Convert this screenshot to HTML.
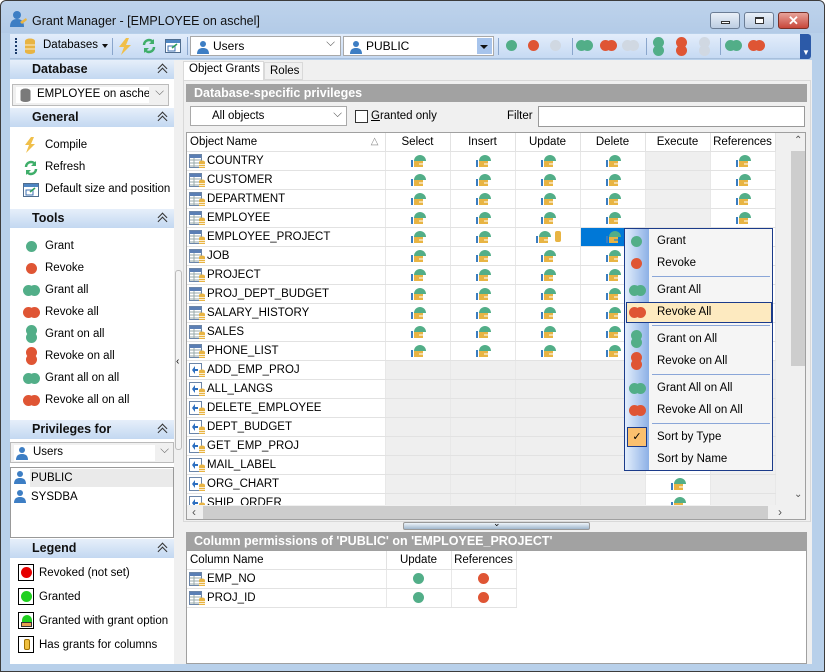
<!DOCTYPE html>
<html><head><meta charset="utf-8"><style>
*{box-sizing:border-box;margin:0;padding:0}
body{width:825px;height:672px;overflow:hidden;font-family:"Liberation Sans",sans-serif;font-size:11.5px;color:#000;background:#fff;position:relative}
.a{position:absolute}
.hdr{position:absolute;left:10px;width:164px;height:19px;background:linear-gradient(#e6effa,#c3d8f1);font-weight:bold;font-size:12.5px;color:#111;padding:2px 0 0 22px}
.hdr:after{content:"";position:absolute;right:8px;top:5px;width:6px;height:6px;border-left:1.5px solid #333;border-top:1.5px solid #333;transform:rotate(45deg)}
.hdr:before{content:"";position:absolute;right:8px;top:9px;width:6px;height:6px;border-left:1.5px solid #333;border-top:1.5px solid #333;transform:rotate(45deg)}
.it{position:absolute;left:45px}
.dot{position:absolute;width:11px;height:11px;border-radius:50%}
.g{background:#52ae88}.r{background:#df5534}.gr{background:#d0d8e2}
.gh{position:absolute;height:18px;background:#a2a2a2;color:#fff;font-weight:bold;font-size:12.5px;padding:2px 0 0 8px}
table{border-collapse:collapse;table-layout:fixed}
td{height:19px;border-bottom:1px solid #e2e2e2;border-right:1px solid #e8e8e8;padding:0;text-align:center;white-space:nowrap;overflow:hidden;position:relative}
td.n{text-align:left;padding-left:20px;position:relative}
td.x{background:#efefef}
th{height:18px;font-weight:normal;border-right:1px solid #e2e2e2;border-bottom:1px solid #e2e2e2;background:#fff}
.ic{display:inline-block;width:16px;height:14px;vertical-align:middle}
.tb{position:absolute;left:2px;top:2px;width:16px;height:15px}
.mi{position:absolute;left:657px}
.sep{position:absolute;left:652px;width:118px;height:1px;background:#8aa6d8}
</style></head><body>
<svg width="0" height="0" style="position:absolute">
<defs>
<symbol id="gg" viewBox="0 0 16 14"><rect x="1" y="6" width="2" height="7" fill="#3a7dc0"/><path d="M4 7a6 6 0 0 1 12 0z" fill="#52ae88"/><path d="M4 7h9v2.5h-4v1h4v2.5h-9z" fill="#e8b443"/></symbol>
<symbol id="tbl" viewBox="0 0 16 15"><rect x="0.5" y="0.5" width="12" height="13" fill="#fff" stroke="#6b85a8"/><rect x="1" y="1" width="11" height="3" fill="#5b7fb5"/><path d="M1 6h11M1 9h11M1 12h11M5 4v9" stroke="#9aa" stroke-width="1"/><ellipse cx="13" cy="8" rx="3" ry="1.5" fill="#e8b443"/><rect x="10" y="8" width="6" height="6" fill="#e8b443"/><path d="M10 10.5h6M10 12.5h6" stroke="#fff" stroke-width=".7"/></symbol>
<symbol id="prc" viewBox="0 0 16 15"><rect x="0.5" y="0.5" width="12" height="13" fill="#fff" stroke="#6b85a8"/><path d="M3 7l3-4v3h3v2h-3v3z" fill="#2d6fc0"/><ellipse cx="13" cy="8" rx="3" ry="1.5" fill="#e8b443"/><rect x="10" y="8" width="6" height="6" fill="#e8b443"/><path d="M10 10.5h6M10 12.5h6" stroke="#fff" stroke-width=".7"/></symbol>
<symbol id="usr" viewBox="0 0 14 14"><circle cx="7" cy="4" r="3" fill="#3d7ec4"/><path d="M1 14c0-5 3-6 6-6s6 1 6 6z" fill="#3d7ec4"/></symbol>
</defs></svg>

<div class="a" style="left:0;top:0;width:825px;height:672px;background:#b8d0ea;border:1px solid #3c3c3c;border-radius:6px 6px 0 0"></div>
<div class="a" style="left:1px;top:1px;width:823px;height:32px;background:linear-gradient(#bed3ec,#b3cbe7);border-radius:6px 6px 0 0"></div>
<svg class="a" style="left:10px;top:10px" width="18" height="18"><circle cx="7" cy="5" r="4" fill="#3d7ec4"/><path d="M0 17c0-6 3-8 7-8s7 2 7 8z" fill="#3d7ec4"/><path d="M10 12l6-4 1 2-5 4z" fill="#e8b443"/></svg>
<div class="a" style="left:32px;top:14px;font-size:12.5px;color:#111">Grant Manager - [EMPLOYEE on aschel]</div>
<div class="a" style="left:710px;top:12px;width:30px;height:17px;border:1px solid #6b7d95;border-radius:3px;background:linear-gradient(#e9f0f8,#bccde2)"><div class="a" style="left:10px;top:8px;width:9px;height:3px;background:#fff;border:1px solid #333"></div></div>
<div class="a" style="left:744px;top:12px;width:30px;height:17px;border:1px solid #6b7d95;border-radius:3px;background:linear-gradient(#e9f0f8,#bccde2)"><div class="a" style="left:10px;top:4px;width:9px;height:7px;background:#fff;border:1px solid #333;border-top-width:2px"></div></div>
<div class="a" style="left:778px;top:12px;width:31px;height:17px;border:1px solid #7a3027;border-radius:3px;background:linear-gradient(#e7a39a,#c8463a);color:#fff;font-weight:bold;text-align:center;font-size:13px;line-height:15px">✕</div>

<div class="a" style="left:10px;top:34px;width:800px;height:25px;background:linear-gradient(#e3edfb,#c6daf3);border-bottom:1px solid #a7bfdc"></div>
<div class="a" style="left:15px;top:38px;width:2px;height:16px;border-left:2px dotted #1b3b6a"></div>
<svg class="a" style="left:24px;top:38px" width="12" height="16"><ellipse cx="6" cy="3" rx="5" ry="2.5" fill="#e8b443"/><rect x="1" y="3" width="10" height="11" fill="#e8b443"/><ellipse cx="6" cy="14" rx="5" ry="2" fill="#e8b443"/><path d="M1 7h10M1 11h10" stroke="#fff" stroke-width=".8"/></svg>
<div class="a" style="left:43px;top:39px">Databases</div>
<div class="a" style="left:102px;top:44px;border:3px solid transparent;border-top:4px solid #111"></div>
<div class="a" style="left:112px;top:38px;width:1px;height:17px;background:#8aa6cc"></div>
<svg class="a" style="left:118px;top:38px" width="14" height="17"><path d="M8 0L1 9h5L3 17l10-10H8l3-7z" fill="#f0bf4a"/></svg>
<svg class="a" style="left:141px;top:38px" width="16" height="16"><path d="M3 7a5 5 0 0 1 9-3" stroke="#3fae6a" stroke-width="2.5" fill="none"/><path d="M13 1v5h-5z" fill="#3fae6a"/><path d="M13 9a5 5 0 0 1-9 3" stroke="#3fae6a" stroke-width="2.5" fill="none"/><path d="M3 15v-5h5z" fill="#3fae6a"/></svg>
<svg class="a" style="left:165px;top:38px" width="16" height="16"><rect x=".5" y="1.5" width="15" height="13" fill="#fff" stroke="#4f6d8f"/><rect x="1" y="2" width="14" height="3" fill="#4f86c2"/><rect x="3" y="8" width="7" height="5" fill="none" stroke="#3b6fb0"/><path d="M7 10l5-4" stroke="#2f9f5a" stroke-width="1.5"/></svg>
<div class="a" style="left:187px;top:37px;width:1px;height:18px;background:#8aa6cc"></div>
<div class="a" style="left:190px;top:36px;width:151px;height:20px;background:#fff;border:1px solid #a9a9a9"><svg class="a" style="left:5px;top:3px" width="14" height="14"><use href="#usr"/></svg><span class="a" style="left:22px;top:2px;font-size:12px">Users</span><span class="a" style="right:5px;top:0;color:#555">⌵</span></div>
<div class="a" style="left:343px;top:36px;width:151px;height:20px;background:#fff;border:1px solid #a9a9a9"><svg class="a" style="left:5px;top:3px" width="14" height="14"><use href="#usr"/></svg><span class="a" style="left:22px;top:2px;font-size:12px">PUBLIC</span><div class="a" style="right:1px;top:1px;width:15px;height:16px;background:#a7c4ec"></div><div class="a" style="right:5px;top:8px;border:4px solid transparent;border-top:4px solid #111"></div></div>
<div class="a" style="left:498px;top:38px;width:1px;height:17px;background:#8aa6cc"></div>
<div class="dot g" style="left:506px;top:40px"></div>
<div class="dot r" style="left:528px;top:40px"></div>
<div class="dot gr" style="left:550px;top:40px"></div>
<div class="a" style="left:572px;top:38px;width:1px;height:17px;background:#8aa6cc"></div>
<div class="dot g" style="left:582px;top:40px"></div><div class="dot g" style="left:576px;top:40px"></div>
<div class="dot r" style="left:606px;top:40px"></div><div class="dot r" style="left:600px;top:40px"></div>
<div class="dot gr" style="left:628px;top:40px"></div><div class="dot gr" style="left:622px;top:40px"></div>
<div class="a" style="left:646px;top:38px;width:1px;height:17px;background:#8aa6cc"></div>
<div class="dot g" style="left:653px;top:37px"></div><div class="dot g" style="left:653px;top:45px"></div>
<div class="dot r" style="left:676px;top:37px"></div><div class="dot r" style="left:676px;top:45px"></div>
<div class="dot gr" style="left:699px;top:37px"></div><div class="dot gr" style="left:699px;top:45px"></div>
<div class="a" style="left:720px;top:38px;width:1px;height:17px;background:#8aa6cc"></div>
<div class="dot g" style="left:731px;top:40px"></div><div class="dot g" style="left:725px;top:40px"></div>
<div class="dot r" style="left:754px;top:40px"></div><div class="dot r" style="left:748px;top:40px"></div>
<div class="a" style="left:800px;top:34px;width:11px;height:25px;background:#2c5aa8;border-radius:0 3px 3px 0"></div>
<div class="a" style="left:802px;top:48px;color:#fff;font-size:8px">▼</div>

<div class="a" style="left:10px;top:60px;width:164px;height:604px;background:#fff"></div>
<div class="a" style="left:174px;top:60px;width:9px;height:604px;background:#f0f0f0"></div>
<div class="a" style="left:175px;top:270px;width:7px;height:180px;border:1px solid #bbb;border-radius:3px;background:#f3f3f3"></div>
<div class="a" style="left:176px;top:356px;font-size:10px">‹</div>
<div class="a" style="left:183px;top:60px;width:629px;height:604px;background:#f0f0f0"></div>

<div class="hdr" style="top:60px">Database</div>
<div class="a" style="left:12px;top:84px;width:157px;height:22px;border:1px solid #bbb;background:#f0f0f0"><div class="a" style="left:3px;top:2px;width:133px;height:16px;background:#fff;overflow:hidden"><span class="a" style="left:21px;top:1px;white-space:nowrap">EMPLOYEE on aschel [</span></div><svg class="a" style="left:7px;top:3px" width="11" height="14"><ellipse cx="5.5" cy="3" rx="5" ry="2.5" fill="#7a7a7a"/><rect x=".5" y="3" width="10" height="9" fill="#7a7a7a"/><ellipse cx="5.5" cy="12" rx="5" ry="2" fill="#7a7a7a"/></svg><span class="a" style="right:4px;top:1px;color:#666">⌵</span></div>
<div class="hdr" style="top:108px">General</div>
<svg class="a" style="left:24px;top:137px" width="13" height="16"><path d="M7 0L1 8h4L2 16l9-9H7l3-7z" fill="#f0bf4a"/></svg><div class="it" style="top:139px">Compile</div>
<svg class="a" style="left:23px;top:160px" width="16" height="16"><path d="M3 7a5 5 0 0 1 9-3" stroke="#3fae6a" stroke-width="2.5" fill="none"/><path d="M13 1v5h-5z" fill="#3fae6a"/><path d="M13 9a5 5 0 0 1-9 3" stroke="#3fae6a" stroke-width="2.5" fill="none"/><path d="M3 15v-5h5z" fill="#3fae6a"/></svg><div class="it" style="top:161px">Refresh</div>
<svg class="a" style="left:23px;top:182px" width="16" height="16"><rect x=".5" y="1.5" width="15" height="13" fill="#fff" stroke="#4f6d8f"/><rect x="1" y="2" width="14" height="3" fill="#4f86c2"/><rect x="3" y="8" width="7" height="5" fill="none" stroke="#3b6fb0"/><path d="M7 10l5-4" stroke="#2f9f5a" stroke-width="1.5"/></svg><div class="it" style="top:183px">Default size and position</div>
<div class="hdr" style="top:209px">Tools</div>
<div class="dot g" style="left:26px;top:241px"></div><div class="it" style="top:240px">Grant</div>
<div class="dot r" style="left:26px;top:263px"></div><div class="it" style="top:262px">Revoke</div>
<div class="dot g" style="left:29px;top:285px"></div><div class="dot g" style="left:23px;top:285px"></div><div class="it" style="top:284px">Grant all</div>
<div class="dot r" style="left:29px;top:307px"></div><div class="dot r" style="left:23px;top:307px"></div><div class="it" style="top:306px">Revoke all</div>
<div class="dot g" style="left:26px;top:325px"></div><div class="dot g" style="left:26px;top:332px"></div><div class="it" style="top:328px">Grant on all</div>
<div class="dot r" style="left:26px;top:347px"></div><div class="dot r" style="left:26px;top:354px"></div><div class="it" style="top:350px">Revoke on all</div>
<div class="dot g" style="left:29px;top:373px"></div><div class="dot g" style="left:23px;top:373px"></div><div class="it" style="top:372px">Grant all on all</div>
<div class="dot r" style="left:29px;top:395px"></div><div class="dot r" style="left:23px;top:395px"></div><div class="it" style="top:394px">Revoke all on all</div>
<div class="hdr" style="top:420px">Privileges for</div>
<div class="a" style="left:10px;top:442px;width:164px;height:21px;border:1px solid #bbb;background:#f0f0f0"><div class="a" style="left:3px;top:2px;width:141px;height:16px;background:#fff"></div><svg class="a" style="left:4px;top:3px" width="14" height="14"><use href="#usr"/></svg><span class="a" style="left:22px;top:3px">Users</span><span class="a" style="right:4px;top:1px;color:#666">⌵</span></div>
<div class="a" style="left:10px;top:467px;width:164px;height:71px;border:1px solid #999;background:#fff"></div>
<div class="a" style="left:30px;top:469px;width:143px;height:18px;background:#eaeaea"></div>
<svg class="a" style="left:13px;top:470px" width="14" height="14"><use href="#usr"/></svg><div class="a" style="left:31px;top:472px">PUBLIC</div>
<svg class="a" style="left:13px;top:489px" width="14" height="14"><use href="#usr"/></svg><div class="a" style="left:31px;top:491px">SYSDBA</div>
<div class="hdr" style="top:539px">Legend</div>
<div class="a" style="left:18px;top:564px;width:16px;height:17px;border:1px solid #000;background:#fff"><div class="a" style="left:2px;top:2px;width:11px;height:11px;border-radius:50%;background:#e60000"></div></div><div class="a" style="left:39px;top:567px">Revoked (not set)</div>
<div class="a" style="left:18px;top:588px;width:16px;height:17px;border:1px solid #000;background:#fff"><div class="a" style="left:2px;top:2px;width:11px;height:11px;border-radius:50%;background:#1fd01f"></div></div><div class="a" style="left:39px;top:591px">Granted</div>
<div class="a" style="left:18px;top:612px;width:16px;height:17px;border:1px solid #000;background:#fff"><div class="a" style="left:3px;top:2px;width:10px;height:7px;border-radius:5px 5px 0 0;background:#1fd01f"></div><div class="a" style="left:2px;top:9px;width:11px;height:5px;background:#e8a050;border:1px solid #333"></div></div><div class="a" style="left:39px;top:615px">Granted with grant option</div>
<div class="a" style="left:18px;top:636px;width:16px;height:17px;border:1px solid #000;background:#fff"><div class="a" style="left:5px;top:2px;width:6px;height:11px;background:#f0c040;border:1px solid #a07000;border-radius:2px"></div></div><div class="a" style="left:39px;top:639px">Has grants for columns</div>

<div class="a" style="left:183px;top:61px;width:81px;height:20px;background:#fff;border:1px solid #d9d9d9;border-bottom:none"></div>
<div class="a" style="left:189px;top:63px">Object Grants</div>
<div class="a" style="left:264px;top:62px;width:39px;height:18px;border:1px solid #d9d9d9;background:#f0f0f0"></div>
<div class="a" style="left:270px;top:65px">Roles</div>
<div class="a" style="left:183px;top:80px;width:628px;height:442px;border:1px solid #d9d9d9;background:#f0f0f0"></div>
<div class="gh" style="left:186px;top:84px;width:621px">Database-specific privileges</div>
<div class="a" style="left:190px;top:106px;width:157px;height:20px;border:1px solid #a9a9a9;background:#fff"><span class="a" style="left:21px;top:3px">All objects</span><span class="a" style="right:4px;top:1px;color:#555">⌵</span></div>
<div class="a" style="left:355px;top:110px;width:13px;height:13px;border:1px solid #333;background:#fff"></div>
<div class="a" style="left:371px;top:110px"><u>G</u>ranted only</div>
<div class="a" style="left:507px;top:110px">Filter</div>
<div class="a" style="left:538px;top:106px;width:267px;height:21px;border:1px solid #999;background:#fff"></div>

<div class="a" style="left:186px;top:132px;width:620px;height:388px;border:1px solid #a0a0a0;background:#f0f0f0;overflow:hidden">
<table style="width:588px;background:#fff">
<colgroup><col style="width:198px"><col style="width:65px"><col style="width:65px"><col style="width:65px"><col style="width:65px"><col style="width:65px"><col style="width:65px"></colgroup>
<tr><th style="text-align:left;padding-left:3px">Object Name<span style="float:right;margin-right:6px;color:#888;font-size:10px">△</span></th><th>Select</th><th>Insert</th><th>Update</th><th>Delete</th><th>Execute</th><th>References</th></tr>
<tr><td class="n"><svg class="tb"><use href="#tbl"/></svg>COUNTRY</td><td><svg class="ic"><use href="#gg"/></svg></td><td><svg class="ic"><use href="#gg"/></svg></td><td><svg class="ic"><use href="#gg"/></svg></td><td><svg class="ic"><use href="#gg"/></svg></td><td class="x"></td><td><svg class="ic"><use href="#gg"/></svg></td></tr>
<tr><td class="n"><svg class="tb"><use href="#tbl"/></svg>CUSTOMER</td><td><svg class="ic"><use href="#gg"/></svg></td><td><svg class="ic"><use href="#gg"/></svg></td><td><svg class="ic"><use href="#gg"/></svg></td><td><svg class="ic"><use href="#gg"/></svg></td><td class="x"></td><td><svg class="ic"><use href="#gg"/></svg></td></tr>
<tr><td class="n"><svg class="tb"><use href="#tbl"/></svg>DEPARTMENT</td><td><svg class="ic"><use href="#gg"/></svg></td><td><svg class="ic"><use href="#gg"/></svg></td><td><svg class="ic"><use href="#gg"/></svg></td><td><svg class="ic"><use href="#gg"/></svg></td><td class="x"></td><td><svg class="ic"><use href="#gg"/></svg></td></tr>
<tr><td class="n"><svg class="tb"><use href="#tbl"/></svg>EMPLOYEE</td><td><svg class="ic"><use href="#gg"/></svg></td><td><svg class="ic"><use href="#gg"/></svg></td><td><svg class="ic"><use href="#gg"/></svg></td><td><svg class="ic"><use href="#gg"/></svg></td><td class="x"></td><td><svg class="ic"><use href="#gg"/></svg></td></tr>
<tr><td class="n"><svg class="tb"><use href="#tbl"/></svg>EMPLOYEE_PROJECT</td><td><svg class="ic"><use href="#gg"/></svg></td><td><svg class="ic"><use href="#gg"/></svg></td><td><svg class="ic"><use href="#gg"/></svg><span style="display:inline-block;width:6px;height:11px;background:#e8b443;border-radius:2px;margin-left:4px;vertical-align:middle"></span></td><td style="background:#0078d7"><svg class="ic"><use href="#gg"/></svg></td><td class="x"></td><td><svg class="ic"><use href="#gg"/></svg></td></tr>
<tr><td class="n"><svg class="tb"><use href="#tbl"/></svg>JOB</td><td><svg class="ic"><use href="#gg"/></svg></td><td><svg class="ic"><use href="#gg"/></svg></td><td><svg class="ic"><use href="#gg"/></svg></td><td><svg class="ic"><use href="#gg"/></svg></td><td class="x"></td><td></td></tr>
<tr><td class="n"><svg class="tb"><use href="#tbl"/></svg>PROJECT</td><td><svg class="ic"><use href="#gg"/></svg></td><td><svg class="ic"><use href="#gg"/></svg></td><td><svg class="ic"><use href="#gg"/></svg></td><td><svg class="ic"><use href="#gg"/></svg></td><td class="x"></td><td></td></tr>
<tr><td class="n"><svg class="tb"><use href="#tbl"/></svg>PROJ_DEPT_BUDGET</td><td><svg class="ic"><use href="#gg"/></svg></td><td><svg class="ic"><use href="#gg"/></svg></td><td><svg class="ic"><use href="#gg"/></svg></td><td><svg class="ic"><use href="#gg"/></svg></td><td class="x"></td><td></td></tr>
<tr><td class="n"><svg class="tb"><use href="#tbl"/></svg>SALARY_HISTORY</td><td><svg class="ic"><use href="#gg"/></svg></td><td><svg class="ic"><use href="#gg"/></svg></td><td><svg class="ic"><use href="#gg"/></svg></td><td><svg class="ic"><use href="#gg"/></svg></td><td class="x"></td><td></td></tr>
<tr><td class="n"><svg class="tb"><use href="#tbl"/></svg>SALES</td><td><svg class="ic"><use href="#gg"/></svg></td><td><svg class="ic"><use href="#gg"/></svg></td><td><svg class="ic"><use href="#gg"/></svg></td><td><svg class="ic"><use href="#gg"/></svg></td><td class="x"></td><td></td></tr>
<tr><td class="n"><svg class="tb"><use href="#tbl"/></svg>PHONE_LIST</td><td><svg class="ic"><use href="#gg"/></svg></td><td><svg class="ic"><use href="#gg"/></svg></td><td><svg class="ic"><use href="#gg"/></svg></td><td><svg class="ic"><use href="#gg"/></svg></td><td class="x"></td><td></td></tr>
<tr><td class="n"><svg class="tb"><use href="#prc"/></svg>ADD_EMP_PROJ</td><td class="x"></td><td class="x"></td><td class="x"></td><td class="x"></td><td></td><td class="x"></td></tr>
<tr><td class="n"><svg class="tb"><use href="#prc"/></svg>ALL_LANGS</td><td class="x"></td><td class="x"></td><td class="x"></td><td class="x"></td><td></td><td class="x"></td></tr>
<tr><td class="n"><svg class="tb"><use href="#prc"/></svg>DELETE_EMPLOYEE</td><td class="x"></td><td class="x"></td><td class="x"></td><td class="x"></td><td></td><td class="x"></td></tr>
<tr><td class="n"><svg class="tb"><use href="#prc"/></svg>DEPT_BUDGET</td><td class="x"></td><td class="x"></td><td class="x"></td><td class="x"></td><td></td><td class="x"></td></tr>
<tr><td class="n"><svg class="tb"><use href="#prc"/></svg>GET_EMP_PROJ</td><td class="x"></td><td class="x"></td><td class="x"></td><td class="x"></td><td></td><td class="x"></td></tr>
<tr><td class="n"><svg class="tb"><use href="#prc"/></svg>MAIL_LABEL</td><td class="x"></td><td class="x"></td><td class="x"></td><td class="x"></td><td></td><td class="x"></td></tr>
<tr><td class="n"><svg class="tb"><use href="#prc"/></svg>ORG_CHART</td><td class="x"></td><td class="x"></td><td class="x"></td><td class="x"></td><td><svg class="ic"><use href="#gg"/></svg></td><td class="x"></td></tr>
<tr><td class="n"><svg class="tb"><use href="#prc"/></svg>SHIP_ORDER</td><td class="x"></td><td class="x"></td><td class="x"></td><td class="x"></td><td><svg class="ic"><use href="#gg"/></svg></td><td class="x"></td></tr>
</table>
<div class="a" style="left:603px;top:0;width:16px;height:372px;background:#f0f0f0"></div>
<div class="a" style="left:604px;top:18px;width:14px;height:215px;background:#cdcdcd"></div>
<div class="a" style="left:607px;top:2px;font-size:10px;color:#555">⌃</div>
<div class="a" style="left:607px;top:356px;font-size:10px;color:#555">⌄</div>
<div class="a" style="left:0;top:372px;width:619px;height:15px;background:#f0f0f0"></div>
<div class="a" style="left:16px;top:373px;width:565px;height:13px;background:#cdcdcd"></div>
<div class="a" style="left:5px;top:372px;font-size:12px;color:#555">‹</div>
<div class="a" style="left:591px;top:372px;font-size:12px;color:#555">›</div>
</div>

<div class="a" style="left:403px;top:522px;width:187px;height:8px;border:1px solid #999;background:linear-gradient(#eef4fa,#9fb6cc);border-radius:2px"></div>
<div class="a" style="left:493px;top:518px;font-size:9px">⌄</div>

<div class="gh" style="left:186px;top:532px;width:621px">Column permissions of 'PUBLIC' on 'EMPLOYEE_PROJECT'</div>
<div class="a" style="left:186px;top:550px;width:621px;height:114px;border:1px solid #a0a0a0;background:#fff">
<table style="width:329px">
<colgroup><col style="width:199px"><col style="width:65px"><col style="width:65px"></colgroup>
<tr><th style="text-align:left;padding-left:3px">Column Name</th><th>Update</th><th>References</th></tr>
<tr><td class="n"><svg class="tb"><use href="#tbl"/></svg>EMP_NO</td><td><span class="dot g" style="position:static;display:inline-block;vertical-align:middle"></span></td><td><span class="dot r" style="position:static;display:inline-block;vertical-align:middle"></span></td></tr>
<tr><td class="n"><svg class="tb"><use href="#tbl"/></svg>PROJ_ID</td><td><span class="dot g" style="position:static;display:inline-block;vertical-align:middle"></span></td><td><span class="dot r" style="position:static;display:inline-block;vertical-align:middle"></span></td></tr>
</table></div>

<div class="a" style="left:624px;top:228px;width:149px;height:243px;background:#f5f5f5;border:1px solid #1b3b8a"></div>
<div class="a" style="left:625px;top:229px;width:24px;height:241px;background:linear-gradient(90deg,#e3eefc,#8cb0e6)"></div>
<div class="dot g" style="left:631px;top:236px"></div><div class="mi" style="top:235px">Grant</div>
<div class="dot r" style="left:631px;top:258px"></div><div class="mi" style="top:257px">Revoke</div>
<div class="sep" style="top:276px"></div>
<div class="dot g" style="left:635px;top:285px"></div><div class="dot g" style="left:629px;top:285px"></div><div class="mi" style="top:284px">Grant All</div>
<div class="a" style="left:626px;top:302px;width:146px;height:21px;background:#fdeac0;border:1px solid #1b3b8a"></div>
<div class="dot r" style="left:635px;top:307px"></div><div class="dot r" style="left:629px;top:307px"></div><div class="mi" style="top:306px">Revoke All</div>
<div class="sep" style="top:325px"></div>
<div class="dot g" style="left:631px;top:330px"></div><div class="dot g" style="left:631px;top:337px"></div><div class="mi" style="top:333px">Grant on All</div>
<div class="dot r" style="left:631px;top:352px"></div><div class="dot r" style="left:631px;top:359px"></div><div class="mi" style="top:355px">Revoke on All</div>
<div class="sep" style="top:374px"></div>
<div class="dot g" style="left:635px;top:383px"></div><div class="dot g" style="left:629px;top:383px"></div><div class="mi" style="top:382px">Grant All on All</div>
<div class="dot r" style="left:635px;top:405px"></div><div class="dot r" style="left:629px;top:405px"></div><div class="mi" style="top:404px">Revoke All on All</div>
<div class="sep" style="top:423px"></div>
<div class="a" style="left:627px;top:427px;width:20px;height:20px;background:#fbc06e;border:1px solid #1b3b8a;text-align:center;font-size:11px;line-height:18px">✓</div>
<div class="mi" style="top:431px">Sort by Type</div>
<div class="mi" style="top:453px">Sort by Name</div>
</body></html>
